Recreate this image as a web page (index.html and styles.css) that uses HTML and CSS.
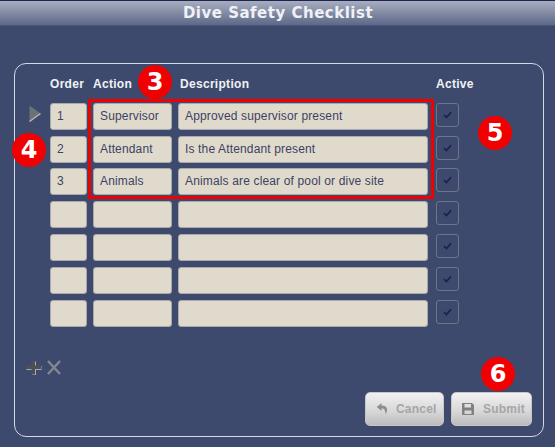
FILE: index.html
```html
<!DOCTYPE html>
<html>
<head>
	<title>Dive Safety Checklist</title>
	<link rel="stylesheet" href="styles.css">
</head>
<body>
	<div class="titlebar">Dive Safety Checklist</div>
	<div class="panel">
		<div class="grid">
			<div class="head">Order</div>
			<div class="head">Action</div>
			<div class="head desc-head">Description</div>
			<div class="head active-head">Active</div>

			<div class="cell">1</div>
			<div class="cell">Supervisor</div>
			<div class="cell">Approved supervisor present</div>
			<div class="check"><svg width="9" height="8" viewBox="0 0 9 8"><path d="M1 4.2 L3.5 6.5 L8 1.2" fill="none" stroke="#1c2150" stroke-width="1.7"/></svg></div>

			<div class="cell">2</div>
			<div class="cell">Attendant</div>
			<div class="cell">Is the Attendant present</div>
			<div class="check"><svg width="9" height="8" viewBox="0 0 9 8"><path d="M1 4.2 L3.5 6.5 L8 1.2" fill="none" stroke="#1c2150" stroke-width="1.7"/></svg></div>

			<div class="cell">3</div>
			<div class="cell">Animals</div>
			<div class="cell">Animals are clear of pool or dive site</div>
			<div class="check"><svg width="9" height="8" viewBox="0 0 9 8"><path d="M1 4.2 L3.5 6.5 L8 1.2" fill="none" stroke="#1c2150" stroke-width="1.7"/></svg></div>

			<div class="cell"></div>
			<div class="cell"></div>
			<div class="cell"></div>
			<div class="check"><svg width="9" height="8" viewBox="0 0 9 8"><path d="M1 4.2 L3.5 6.5 L8 1.2" fill="none" stroke="#1c2150" stroke-width="1.7"/></svg></div>

			<div class="cell"></div>
			<div class="cell"></div>
			<div class="cell"></div>
			<div class="check"><svg width="9" height="8" viewBox="0 0 9 8"><path d="M1 4.2 L3.5 6.5 L8 1.2" fill="none" stroke="#1c2150" stroke-width="1.7"/></svg></div>

			<div class="cell"></div>
			<div class="cell"></div>
			<div class="cell"></div>
			<div class="check"><svg width="9" height="8" viewBox="0 0 9 8"><path d="M1 4.2 L3.5 6.5 L8 1.2" fill="none" stroke="#1c2150" stroke-width="1.7"/></svg></div>

			<div class="cell"></div>
			<div class="cell"></div>
			<div class="cell"></div>
			<div class="check"><svg width="9" height="8" viewBox="0 0 9 8"><path d="M1 4.2 L3.5 6.5 L8 1.2" fill="none" stroke="#1c2150" stroke-width="1.7"/></svg></div>
		</div>

		<div class="tools">
			<svg width="17" height="17" viewBox="0 0 17 17"><path d="M7 2.5 H11 V7 H16.5 V11 H11 V16 H7 V11 H1.5 V7 H7 Z" fill="#a9acb2"/><path d="M6.5 2 H10 V6.5 H16 V10 H10 V15.5 H6.5 V10 H1 V6.5 H6.5 Z" fill="#4c4f55"/></svg>
			<svg width="16" height="17" viewBox="0 0 16 17"><path d="M2 2 L14 15 M14 2 L2 15" fill="none" stroke="#84878e" stroke-width="2.4"/></svg>
		</div>

		<div class="buttons">
			<button class="btn cancel">
				<svg width="13" height="13" viewBox="0 0 13 13"><path d="M5.5 1 L0.8 5 L5.5 9 V6.4 C8 6.2 9.4 7.6 9.6 12.4 C12.2 8 12 3.6 5.5 3.4 Z" fill="#8e8e8e"/></svg>
				Cancel
			</button>
			<button class="btn submit">
				<svg width="12" height="12" viewBox="0 0 12 12"><path d="M0 0 H10 L12 2 V12 H0 Z M2.5 1 V4.5 H9 V1 Z M2.5 7.5 V11 H9.5 V7.5 Z" fill="#808080" fill-rule="evenodd"/></svg>
				Submit
			</button>
		</div>
	</div>

	<svg class="pointer" width="12" height="17" viewBox="0 0 12 17"><path d="M0.5 0.5 L11.5 8.5 L0.5 16.5 Z" fill="#6f7178"/><path d="M0.5 16.5 L11.5 8.5" stroke="#b5b6ba" stroke-width="1.4"/></svg>
	<div class="redbox"></div>
	<div class="badge b3">3</div>
	<div class="badge b4">4</div>
	<div class="badge b5">5</div>
	<div class="badge b6">6</div>
</body>
</html>
```

FILE: styles.css
```css
body {
	margin: 0;
	padding: 0;
	width: 555px;
	height: 447px;
	overflow: hidden;
	background-color: #3e4a6d;
	font-family: "Liberation Sans", Arial, sans-serif;
	font-size: 12px;
}

.titlebar {
	height: 24px;
	line-height: 25px;
	padding-left: 1px;
	border-top: 1px solid #1c2450;
	text-align: center;
	color: #f0f1f5;
	font-family: "DejaVu Sans", sans-serif;
	font-size: 15px;
	font-weight: bold;
	letter-spacing: 0.5px;
	background: linear-gradient(#a8adbf, #5d6889);
	box-shadow: 0 1px 0 #4a5578;
}

.panel {
	width: 528px;
	height: 372px;
	margin: 38px 0 0 14px;
	border: 1px solid #d4d8e2;
	border-radius: 12px;
	display: flex;
	flex-direction: column;
}

.grid {
	display: grid;
	grid-template-columns: 37px 79px 250px 31px;
	grid-template-rows: 20px repeat(7, 27px);
	column-gap: 6px;
	row-gap: 5.83px;
	margin: 13px 0 0 35px;
	align-items: start;
}

.head {
	height: 15px;
	color: #f0f2f6;
	font-weight: bold;
	font-size: 12px;
	line-height: 15px;
	letter-spacing: 0.3px;
}

.desc-head {
	margin-left: 2px;
}

.active-head {
	margin-left: 2px;
}

.cell {
	box-sizing: border-box;
	height: 27px;
	line-height: 25px;
	padding-left: 6px;
	background-color: #e0dacd;
	border: 1px solid #a9a9ac;
	border-radius: 3px;
	color: #3d4263;
	font-size: 12px;
	letter-spacing: 0.15px;
}

.check {
	box-sizing: border-box;
	width: 23px;
	height: 24px;
	margin-left: 2px;
	border: 1px solid #6f7587;
	border-radius: 3px;
	display: flex;
	align-items: center;
	justify-content: center;
}

.tools {
	display: flex;
	gap: 4px;
	margin: 32px 0 0 10px;
}

.buttons {
	display: flex;
	justify-content: flex-end;
	gap: 7px;
	margin: 16px 11px 0 0;
}

.btn {
	height: 34px;
	border: 1px solid #c8c8c8;
	border-radius: 5px;
	background: linear-gradient(#f1f1f1, #d6d6d6 60%, #bcbcbc);
	color: #a5a5a8;
	font-family: "Liberation Sans", Arial, sans-serif;
	font-size: 12px;
	font-weight: bold;
	letter-spacing: 0.2px;
	display: flex;
	align-items: center;
	padding: 0;
}

.cancel {
	width: 79px;
	gap: 7px;
	padding-left: 10px;
}

.submit {
	width: 81px;
	gap: 9px;
	padding-left: 10px;
}

.pointer {
	position: absolute;
	left: 29px;
	top: 105px;
}

.redbox {
	position: absolute;
	left: 88px;
	top: 99px;
	width: 340px;
	height: 94px;
	border: 3px solid #f00000;
}

.badge {
	position: absolute;
	width: 34px;
	height: 34px;
	line-height: 34px;
	border-radius: 50%;
	background-color: #f00000;
	color: #fff;
	text-align: center;
	font-family: "DejaVu Sans", sans-serif;
	font-size: 24px;
	font-weight: bold;
}

.b3 { left: 138px; top: 65px; }
.b4 { left: 12px; top: 133px; }
.b5 { left: 478px; top: 116px; }
.b6 { left: 481px; top: 357px; }
```
